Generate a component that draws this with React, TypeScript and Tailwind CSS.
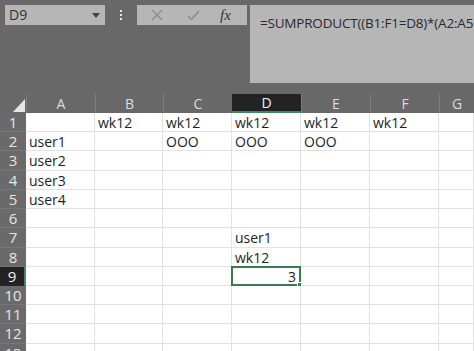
import React from "react";

const cols = ["A", "B", "C", "D", "E", "F", "G"];
const widths = [69, 68, 69, 69, 69, 69, 35];
const rowHeights = [19, 19, 20, 19, 19, 19, 20, 19, 19, 19, 19, 20, 19];

const data: Record<string, string> = {
  "1-B": "wk12",
  "1-C": "wk12",
  "1-D": "wk12",
  "1-E": "wk12",
  "1-F": "wk12",
  "2-A": "user1",
  "2-C": "OOO",
  "2-D": "OOO",
  "2-E": "OOO",
  "3-A": "user2",
  "4-A": "user3",
  "5-A": "user4",
  "7-D": "user1",
  "8-D": "wk12",
};

export default function App() {
  return (
    <div
      className="w-[474px] h-[351px] overflow-hidden bg-[#686868] flex flex-col"
      style={{ fontFamily: '"Open Sans", "Noto Sans", sans-serif' }}
    >
      {/* top bar */}
      <div className="h-[94px] shrink-0 flex items-start pt-[5px] pl-[5px]">
        <div className="w-[100px] h-[20px] bg-[#b6b6b6] flex items-center justify-between pl-[4px] pr-[5px]">
          <span className="text-[14px] text-[#333] leading-none">D9</span>
          <svg width="8" height="5" viewBox="0 0 8 5">
            <polygon points="0,0 8,0 4,5" fill="#444" />
          </svg>
        </div>
        <div className="w-[32px] h-[20px] flex flex-col items-center justify-center gap-[2px]">
          <div className="w-[2px] h-[2px] bg-[#e8e8e8]" />
          <div className="w-[2px] h-[2px] bg-[#e8e8e8]" />
          <div className="w-[2px] h-[2px] bg-[#e8e8e8]" />
        </div>
        <div className="w-[110px] h-[20px] bg-[#b6b6b6] flex items-center">
          <svg className="ml-[14px]" width="12" height="12" viewBox="0 0 12 12">
            <path d="M1 1 L11 11 M11 1 L1 11" stroke="#8a8a8a" strokeWidth="1.3" />
          </svg>
          <svg className="ml-[24px]" width="13" height="11" viewBox="0 0 13 11">
            <path d="M1 6 L4.5 9.5 L12 1" stroke="#8a8a8a" strokeWidth="1.5" fill="none" />
          </svg>
          <span
            className="ml-[20px] text-[15px] italic text-[#333] leading-none"
            style={{ fontFamily: '"Liberation Serif", serif' }}
          >
            fx
          </span>
        </div>
        <div className="ml-[3px] flex-1 h-[78px] bg-[#b6b6b6] pl-[10px] pt-[5px] overflow-hidden whitespace-nowrap">
          <span className="text-[13.5px] tracking-[-0.2px] text-[#2a2a2a] leading-none">
            =SUMPRODUCT((B1:F1=D8)*(A2:A5
          </span>
        </div>
      </div>

      {/* header row */}
      <div className="flex h-[19px] shrink-0">
        <div className="w-[26px] h-full relative">
          <svg className="absolute right-[1px] bottom-[1px]" width="12" height="13" viewBox="0 0 12 13">
            <polygon points="12,0 12,13 0,13" fill="#e6e6e6" />
          </svg>
        </div>
        {cols.map((c, i) => (
          <div
            key={c}
            className={
              c === "D"
                ? "h-full flex items-center justify-center bg-[#232323] text-[#f0f0f0] text-[14px] border-b-2 border-[#3e8a5c] shrink-0"
                : "h-full flex items-center justify-center text-[#dcdcdc] text-[14px] border-l border-[#7e7e7e] shrink-0"
            }
            style={{ width: widths[i] }}
          >
            {c}
          </div>
        ))}
      </div>

      {/* rows */}
      <div className="flex flex-col bg-white">
        {rowHeights.map((h, ri) => {
          const r = ri + 1;
          return (
            <div key={r} className="flex" style={{ height: h }}>
              <div
                className={
                  r === 9
                    ? "w-[26px] shrink-0 flex items-center justify-center bg-[#232323] text-[#f0f0f0] text-[15px] border-r-2 border-[#3e8a5c]"
                    : "w-[26px] shrink-0 flex items-center justify-center bg-[#6a6a6a] text-[#e6e6e6] text-[15px] border-b border-[#767676]"
                }
              >
                {r}
              </div>
              {cols.map((c, i) => {
                const v = data[`${r}-${c}`];
                const sel = r === 9 && c === "D";
                return (
                  <div
                    key={c}
                    className="relative shrink-0 border-r border-b border-[#e2e2e2] flex items-center pl-[3px] text-[14px] text-[#1e1e1e] whitespace-nowrap"
                    style={{ width: widths[i] }}
                  >
                    {v}
                    {sel && (
                      <div className="absolute left-[-1px] top-[-1px] right-[-1px] bottom-[-1px] border-2 border-[#3d7a52] flex items-center justify-end pr-[3px]">
                        <span className="text-[14px] text-[#1e1e1e]">3</span>
                        <div className="absolute right-[-3px] bottom-[-3px] w-[5px] h-[5px] bg-[#3d7a52] border border-white" />
                      </div>
                    )}
                  </div>
                );
              })}
            </div>
          );
        })}
      </div>
    </div>
  );
}
